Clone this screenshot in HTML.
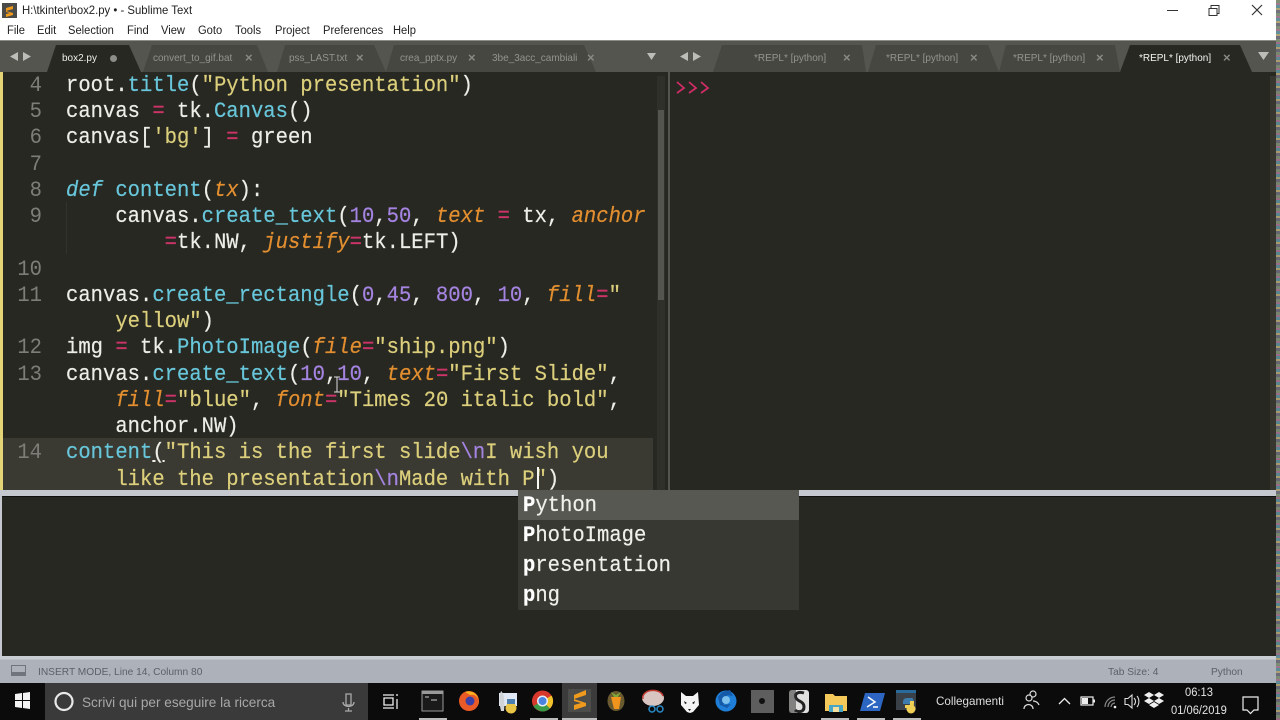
<!DOCTYPE html>
<html><head><meta charset="utf-8"><style>
html,body{margin:0;padding:0;width:1280px;height:720px;overflow:hidden;background:#fff}
body{position:relative;font-family:"Liberation Sans",sans-serif}
.a{position:absolute}
.u{position:absolute;white-space:nowrap;line-height:16px;font-size:11.5px;color:#222;transform:scaleX(.97);transform-origin:left;filter:blur(.2px)}
.tb{position:absolute;white-space:nowrap;line-height:16px;font-size:10.5px;color:#94948e;top:50px;transform:scaleX(.95);transform-origin:left;filter:blur(.25px)}
.x{position:absolute;top:50px;font-size:13px;line-height:16px;color:#8a8a84;font-weight:bold;filter:blur(.3px)}
.l{position:absolute;left:66px;white-space:pre;font-family:"Liberation Mono",monospace;font-size:22px;line-height:26px;height:26px;margin-top:1.5px;color:#eeeee8;transform:scaleX(.934);transform-origin:left;-webkit-text-stroke:.2px currentColor;filter:blur(.3px)}
.n{position:absolute;width:42px;text-align:right;left:0;margin-top:1.5px;font-family:"Liberation Mono",monospace;font-size:22px;line-height:26px;color:#7e7e78;transform:scaleX(.934);transform-origin:right;filter:blur(.3px)}
.f{color:#68c6da}.s{color:#dccf7c}.p{color:#cc3468}.m{color:#a484e0}.o{color:#e38f30;font-style:italic}
.ac{position:absolute;left:523px;margin-top:1px;white-space:pre;font-family:"Liberation Mono",monospace;font-size:22px;line-height:30px;color:#f0f0ea;transform:scaleX(.934);transform-origin:left;-webkit-text-stroke:.2px currentColor;filter:blur(.3px)}
.ac b{font-weight:bold;color:#fff}
</style></head><body>

<!-- title bar -->
<svg class="a" style="left:2px;top:3px" width="16" height="16"><rect width="15" height="15" x="0" y="0" fill="#4a4a48"/><path d="M4 5 L11 3 V6 L4 8Z M4 8 L11 10 V12 L4 14 V11 L8 10 L4 9Z" fill="#f09a1d"/></svg>
<div class="u" style="left:22px;top:3px;font-size:11.7px">H:\tkinter\box2.py • - Sublime Text</div>
<div class="u" style="left:7px;top:23px">File</div>
<div class="u" style="left:37px;top:23px">Edit</div>
<div class="u" style="left:68px;top:23px">Selection</div>
<div class="u" style="left:127px;top:23px">Find</div>
<div class="u" style="left:161px;top:23px">View</div>
<div class="u" style="left:198px;top:23px">Goto</div>
<div class="u" style="left:235px;top:23px">Tools</div>
<div class="u" style="left:275px;top:23px">Project</div>
<div class="u" style="left:323px;top:23px">Preferences</div>
<div class="u" style="left:393px;top:23px">Help</div>
<svg class="a" style="left:1160px;top:0" width="116" height="24" fill="none" stroke="#333" stroke-width="1"><path d="M7 10.500H18"/><path d="M49 8.500h8v7h-8z M51 8.500v-3h8v8h-2"/><path d="M92 5L102 15M102 5L92 15" stroke-width="1.200"/></svg>

<!-- tab strip -->
<div class="a" style="left:0;top:40px;width:1280px;height:32px;background:#54554f;border-top:1px solid #8c8c88;box-sizing:border-box"></div>
<svg class="a" style="left:0;top:40px" width="1280" height="32">
<g fill="#474741">
<path d="M143 32L152 5H257L268 32Z"/><path d="M277 32L285 5H374L386 32Z"/><path d="M386 32L394 5H490L584 5L596 32Z"/><path d="M713 32L722 5H862L866 32Z"/><path d="M868 32L876 5H988L999 32Z"/><path d="M999 32L1006 5H1115L1120 32Z"/>
</g>
<path d="M47 32L56 5H129L141 32Z" fill="#272822"/>
<path d="M1120 32L1130 5H1240L1252 32Z" fill="#272822"/>
<g fill="#bcbcb8">
<path d="M10 16.500L18 12V21Z"/><path d="M23 12L31 16.500L23 21Z"/>
<path d="M680 16.500L688 12V21Z"/><path d="M693 12L701 16.500L693 21Z"/>
<path d="M647 13H656L651.500 20Z"/><path d="M1258 12H1269L1263.500 20Z"/>
</g>
</svg>
<div class="tb" style="left:62px;color:#f0f0ea">box2.py</div>
<div class="a" style="left:110px;top:55px;width:7px;height:7px;border-radius:50%;background:#8c8c88"></div>
<div class="tb" style="left:153px">convert_to_gif.bat</div><div class="x" style="left:245px">×</div>
<div class="tb" style="left:289px">pss_LAST.txt</div><div class="x" style="left:356px">×</div>
<div class="tb" style="left:400px">crea_pptx.py</div><div class="x" style="left:468px">×</div>
<div class="tb" style="left:492px">3be_3acc_cambiali</div><div class="x" style="left:587px">×</div>
<div class="tb" style="left:754px">*REPL* [python]</div><div class="x" style="left:843px">×</div>
<div class="tb" style="left:886px">*REPL* [python]</div><div class="x" style="left:970px">×</div>
<div class="tb" style="left:1013px">*REPL* [python]</div><div class="x" style="left:1096px">×</div>
<div class="tb" style="left:1139px;color:#f4f4f0">*REPL* [python]</div><div class="x" style="left:1223px">×</div>

<!-- editor panes -->
<div class="a" style="left:0;top:72px;width:1280px;height:418px;background:#272822"></div>
<div class="a" style="left:0;top:72px;width:2.500px;height:418px;background:#e2d477"></div>
<div class="a" style="left:3px;top:438px;width:650px;height:52px;background:#3a3a32"></div>
<div class="a" style="left:668px;top:72px;width:1.500px;height:418px;background:#55554f"></div>
<div class="a" style="left:657px;top:76px;width:8px;height:414px;background:#30302b"></div>
<div class="a" style="left:658px;top:110px;width:6px;height:190px;background:#55554f"></div>
<div class="a" style="left:1270px;top:76px;width:6px;height:414px;background:#37372f"></div>
<div class="a" style="left:66px;top:202px;width:1px;height:52px;background:#33332d"></div>

<div class="n" style="top:71px">4</div><div class="l" style="top:71px">root.<span class="f">title</span>(<span class="s">"Python presentation"</span>)</div>
<div class="n" style="top:97px">5</div><div class="l" style="top:97px">canvas <span class="p">=</span> tk.<span class="f">Canvas</span>()</div>
<div class="n" style="top:123px">6</div><div class="l" style="top:123px">canvas[<span class="s">'bg'</span>] <span class="p">=</span> green</div>
<div class="n" style="top:150px">7</div>
<div class="n" style="top:176px">8</div><div class="l" style="top:176px"><span class="f" style="font-style:italic">def</span> <span class="f">content</span>(<span class="o">tx</span>):</div>
<div class="n" style="top:202px">9</div><div class="l" style="top:202px">    canvas.<span class="f">create_text</span>(<span class="m">10</span>,<span class="m">50</span>, <span class="o">text</span> <span class="p">=</span> tx, <span class="o">anchor</span></div>
<div class="l" style="top:228px">        <span class="p">=</span>tk.NW, <span class="o">justify</span><span class="p">=</span>tk.LEFT)</div>
<div class="n" style="top:255px">10</div>
<div class="n" style="top:281px">11</div><div class="l" style="top:281px">canvas.<span class="f">create_rectangle</span>(<span class="m">0</span>,<span class="m">45</span>, <span class="m">800</span>, <span class="m">10</span>, <span class="o">fill</span><span class="p">=</span><span class="s">"</span></div>
<div class="l" style="top:307px">    <span class="s">yellow"</span>)</div>
<div class="n" style="top:333px">12</div><div class="l" style="top:333px">img <span class="p">=</span> tk.<span class="f">PhotoImage</span>(<span class="o">file</span><span class="p">=</span><span class="s">"ship.png"</span>)</div>
<div class="n" style="top:360px">13</div><div class="l" style="top:360px">canvas.<span class="f">create_text</span>(<span class="m">10</span>,<span class="m">10</span>, <span class="o">text</span><span class="p">=</span><span class="s">"First Slide"</span>,</div>
<div class="l" style="top:386px">    <span class="o">fill</span><span class="p">=</span><span class="s">"blue"</span>, <span class="o">font</span><span class="p">=</span><span class="s">"Times 20 italic bold"</span>,</div>
<div class="l" style="top:412px">    anchor.NW)</div>
<div class="n" style="top:438px">14</div><div class="l" style="top:438px"><span class="f">content</span><span style="text-decoration:underline">(</span><span class="s">"This is the first slide</span><span class="m">\n</span><span class="s">I wish you</span></div>
<div class="l" style="top:465px">    <span class="s">like the presentation</span><span class="m">\n</span><span class="s">Made with P"</span>)</div>
<div class="a" style="left:537px;top:467px;width:1.500px;height:22px;background:#f8f8f2"></div>
<svg class="a" style="left:333px;top:376px" width="9" height="18" fill="none" stroke="#ddd" stroke-width="1"><path d="M1 1H7M4 1V16M1 16H7"/></svg>
<svg class="a" style="left:675px;top:78px" width="40" height="18" fill="none" stroke="#d02c68" stroke-width="1.800"><path d="M2 4L9 10L2 15M14 4L21 10L14 15M26 4L33 10L26 15"/></svg>

<!-- lower panel -->
<div class="a" style="left:0;top:490px;width:1280px;height:7px;background:#c5c8cf"></div>
<div class="a" style="left:0;top:496px;width:1280px;height:161px;background:#c5c8cf"></div>
<div class="a" style="left:2px;top:496px;width:1278px;height:160px;background:#272822;border-top:1px solid #111;box-sizing:border-box"></div>
<div class="a" style="left:518px;top:490px;width:281px;height:120px;background:#383832"></div>
<div class="a" style="left:518px;top:490px;width:281px;height:30px;background:#585853"></div>
<div class="ac" style="top:490px"><b>P</b>ython</div>
<div class="ac" style="top:520px"><b>P</b>hotoImage</div>
<div class="ac" style="top:550px"><b>p</b>resentation</div>
<div class="ac" style="top:580px"><b>p</b>ng</div>

<!-- status bar -->
<div class="a" style="left:0;top:656px;width:1280px;height:27px;background:linear-gradient(#c8ccd3 0,#c8ccd3 3px,#adb1ba 4px)"></div>
<svg class="a" style="left:11px;top:665px" width="16" height="12"><rect x=".5" y=".5" width="14" height="10" fill="none" stroke="#70747c"/><rect x="1" y="7" width="13" height="3.500" fill="#70747c"/></svg>
<div class="u" style="left:38px;top:664px;font-size:10.500px;color:#5d6068">INSERT MODE, Line 14, Column 80</div>
<div class="u" style="left:1108px;top:664px;font-size:10.500px;color:#5d6068">Tab Size: 4</div>
<div class="u" style="left:1211px;top:664px;font-size:10.500px;color:#5d6068">Python</div>

<!-- taskbar -->
<div class="a" style="left:0;top:683px;width:1280px;height:37px;background:#0b0b0c"></div>
<div class="a" style="left:45px;top:683px;width:323px;height:37px;background:#3a3a3b"></div>
<div class="a" style="left:562px;top:683px;width:35px;height:37px;background:#3b3b3c"></div>
<svg class="a" style="left:0;top:683px" width="1280" height="37">
<path d="M15 11L22 10V17H15ZM23 10L30 9V17H23ZM15 18H22V25L15 24ZM23 18H30V26L23 25Z" fill="#f4f4f4"/>
<circle cx="64" cy="18.500" r="8.500" fill="none" stroke="#e8e8e8" stroke-width="2.200"/>
<path d="M346 11h5v11h-5z M343 19c0 6 11 6 11 0 M348.500 25v3 M345 28h7" fill="none" stroke="#aaa" stroke-width="1.300"/>
<path d="M383 12H394M383 25H394M384 15H393V22H384Z M397 11V13M397 16V26" fill="none" stroke="#eee" stroke-width="1.300"/>
<rect x="422" y="8" width="21" height="20" fill="#1a1a1a" stroke="#999"/><rect x="422" y="8" width="21" height="3" fill="#9a9a9a"/><path d="M425 14h4M431 17h6" stroke="#ccc"/>
<circle cx="469" cy="18" r="10" fill="#ea5a26"/><path d="M465 9a10 10 0 0 1 13 13a7 7 0 0 0-8-10z" fill="#f8b020"/><circle cx="470" cy="18" r="4.500" fill="#3a3fa8"/>
<rect x="499" y="10" width="18" height="13" fill="#dfe8f4"/><path d="M501 8c3 2 4 10 3 20h-3c-2-8-2-15 0-20z" fill="#d0d4d8"/><circle cx="511" cy="25" r="5.500" fill="#e8c547"/><path d="M507 16h8v5h-8z" fill="#4a7fb0"/>
<circle cx="542.500" cy="18" r="10.500" fill="#d8382c"/><path d="M542.500 18L533.500 23A10.500 10.500 0 0 0 550 25.500Z" fill="#3a9a48"/><path d="M542.500 18L550 25.500A10.500 10.500 0 0 0 551.500 12.500Z" fill="#f2c22a"/><circle cx="542.500" cy="18" r="5.500" fill="#e8eef8"/><circle cx="542.500" cy="18" r="4" fill="#4a84e0"/>
<rect x="568" y="6" width="23" height="23" fill="#4c4c4b"/><path d="M574 15L586 10V15L574 19ZM574 19L586 23V26L574 30V25L581 23L574 21Z" fill="#f09a1d" transform="translate(0,-3)"/>
<ellipse cx="616" cy="18" rx="8.500" ry="10" fill="#6a5a30"/><path d="M611 14h10l-2 12h-5z" fill="#f0941e"/><path d="M611 9l5 3 5-3-3 5h-4z" fill="#7aa83a"/>
<ellipse cx="653" cy="15" rx="11" ry="8" fill="#d8c4c0"/><path d="M643 16a10 7 0 0 1 20-3" fill="none" stroke="#c03a30" stroke-width="1.500"/><circle cx="652" cy="26" r="3" fill="none" stroke="#2a8ac8" stroke-width="1.500"/><circle cx="660" cy="26" r="3" fill="none" stroke="#2a8ac8" stroke-width="1.500"/>
<path d="M681 9l5 4h7l5-4 1 13-6 7-3 1-3-1-6-7z" fill="#f4f4f4"/><path d="M684 18l3 2-2 1zM695 18l-3 2 2 1zM688 26h3l-1.500 2z" fill="#111"/>
<circle cx="726" cy="18" r="10.500" fill="#1f7fd8"/><path d="M722 9l8-2 3 6-6-1 2 5-6 5 8-1-4 4-7-3-2-8z" fill="#155aa8"/><circle cx="726" cy="17" r="4" fill="#7cc0ee"/>
<rect x="751" y="7" width="23" height="23" fill="#5e5e5e"/><circle cx="762" cy="18" r="3" fill="#111"/>
<rect x="789" y="7" width="20" height="23" rx="3" fill="#e0e0de"/><path d="M804 10c-6-2-10 1-8 5s8 3 8 9-7 5-9 3" fill="none" stroke="#222" stroke-width="3"/><path d="M789 7h7v23h-7z" fill="#333" opacity=".55"/>
<path d="M825 11h8l2 2h12v15h-22z" fill="#f4c95a"/><rect x="829" y="22" width="14" height="7" fill="#49a5c4"/><rect x="833" y="24" width="6" height="5" fill="#f4e0a0"/>
<path d="M865 10H885L880 28H860Z" fill="#2c66c2"/><path d="M868 14L875 19L867 24M873 24H878" fill="none" stroke="#fff" stroke-width="1.500"/>
<rect x="896" y="7" width="20" height="20" fill="#3a4048"/><rect x="896" y="7" width="20" height="3" fill="#2a6a9a"/><path d="M908 15c-5 0-5 2-5 6h5zM908 21h4c2 0 2-6 0-6h-4z" fill="#3f7cae"/><path d="M905 25h5c4 0 4-2 4-7h-4v4h-5z" fill="#f0cf55"/><circle cx="911" cy="26" r="4.500" fill="#f0cf55"/>
<circle cx="1033" cy="11" r="3" fill="none" stroke="#ddd" stroke-width="1.200"/><circle cx="1029" cy="15" r="3" fill="#0b0b0c" stroke="#ddd" stroke-width="1.200"/><path d="M1024 26c0-6 9-6 9 0M1033 18c2 0 5 1 6 4" fill="none" stroke="#ddd" stroke-width="1.200"/>
<path d="M1059 21L1064.500 15.500L1070 21" fill="none" stroke="#eee" stroke-width="1.300"/>
<rect x="1081" y="14" width="12" height="8" fill="none" stroke="#eee" stroke-width="1.200"/><rect x="1082" y="15" width="6" height="6" fill="#eee"/><rect x="1093.500" y="16.500" width="1.500" height="3" fill="#eee"/>
<path d="M1105 24a10 10 0 0 1 10-10M1108 24a7 7 0 0 1 7-7M1111 24a4 4 0 0 1 4-4" fill="none" stroke="#888" stroke-width="1.200"/><circle cx="1115" cy="24" r="1.300" fill="#eee"/>
<path d="M1125 15.500h3l4-3.500v13l-4-3.500h-3z M1134 15c2 2 2 5 0 7M1137 13c2.500 3 2.500 8 0 11" fill="none" stroke="#ddd" stroke-width="1.100"/>
<path d="M1149 10l5 3-5 3-5-3zM1159 10l5 3-5 3-5-3zM1149 16l5 3-5 3-5-3zM1159 16l5 3-5 3-5-3zM1154 20l5 3-5 3-5-3z" fill="#f0f0f0" transform="translate(0,-1)"/>
<path d="M1243 14H1258V27H1254L1250.500 30.500L1247 27H1243Z" fill="none" stroke="#eee" stroke-width="1.200"/>
</svg>
<div class="a" style="left:419px;top:718px;width:28px;height:2px;background:#bbb"></div>
<div class="a" style="left:530px;top:718px;width:28px;height:2px;background:#bbb"></div>
<div class="a" style="left:562px;top:718px;width:35px;height:2px;background:#bbb"></div>
<div class="a" style="left:821px;top:718px;width:28px;height:2px;background:#bbb"></div>
<div class="a" style="left:857px;top:718px;width:28px;height:2px;background:#bbb"></div>
<div class="a" style="left:893px;top:718px;width:28px;height:2px;background:#bbb"></div>
<div class="u" style="left:82px;top:693px;font-size:14px;line-height:18px;color:#a8a8a8">Scrivi qui per eseguire la ricerca</div>
<div class="u" style="left:936px;top:693px;font-size:12px;color:#dedede">Collegamenti</div>
<div class="u" style="left:1185px;top:685px;font-size:11.500px;color:#e4e4e4">06:13</div>
<div class="u" style="left:1171px;top:703px;font-size:11.500px;color:#e4e4e4">01/06/2019</div>

<!-- noise strip -->
<div class="a" style="left:1276px;top:0;width:4px;height:720px;background:repeating-linear-gradient(180deg,#7a8a70 0 3px,#a0708a 3px 5px,#5a8a96 5px 8px,#b0a070 8px 10px,#686878 10px 13px);opacity:.95"></div>
</body></html>
